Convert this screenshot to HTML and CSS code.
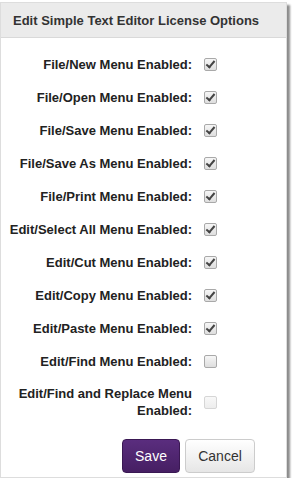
FILE: index.html
```html
<!DOCTYPE html>
<html lang="en">
  <head>
    <meta charset="UTF-8" />
    <meta name="viewport" content="width=device-width, initial-scale=1.0" />
    <title>License Options</title>
    <link rel="stylesheet" href="styles.css">
  </head>
  <body>
    <div class="panel">
      <div class="panel-heading">Edit Simple Text Editor License Options</div>
      <form class="panel-body">
        <div class="form-row">
          <label for="fileNew">File/New Menu Enabled:</label>
          <input type="checkbox" id="fileNew" checked />
        </div>
        <div class="form-row">
          <label for="fileOpen">File/Open Menu Enabled:</label>
          <input type="checkbox" id="fileOpen" checked />
        </div>
        <div class="form-row">
          <label for="fileSave">File/Save Menu Enabled:</label>
          <input type="checkbox" id="fileSave" checked />
        </div>
        <div class="form-row">
          <label for="fileSaveAs">File/Save As Menu Enabled:</label>
          <input type="checkbox" id="fileSaveAs" checked />
        </div>
        <div class="form-row">
          <label for="filePrint">File/Print Menu Enabled:</label>
          <input type="checkbox" id="filePrint" checked />
        </div>
        <div class="form-row">
          <label for="editSelectAll">Edit/Select All Menu Enabled:</label>
          <input type="checkbox" id="editSelectAll" checked />
        </div>
        <div class="form-row">
          <label for="editCut">Edit/Cut Menu Enabled:</label>
          <input type="checkbox" id="editCut" checked />
        </div>
        <div class="form-row">
          <label for="editCopy">Edit/Copy Menu Enabled:</label>
          <input type="checkbox" id="editCopy" checked />
        </div>
        <div class="form-row">
          <label for="editPaste">Edit/Paste Menu Enabled:</label>
          <input type="checkbox" id="editPaste" checked />
        </div>
        <div class="form-row">
          <label for="editFind">Edit/Find Menu Enabled:</label>
          <input type="checkbox" id="editFind" />
        </div>
        <div class="form-row tall">
          <label for="editReplace">Edit/Find and Replace Menu Enabled:</label>
          <input type="checkbox" id="editReplace" disabled />
        </div>
        <div class="form-actions">
          <button type="button" class="btn btn-primary">Save</button>
          <button type="button" class="btn btn-default">Cancel</button>
        </div>
      </form>
    </div>
  </body>
</html>
```

FILE: styles.css
```css
body {
  font-family: "Liberation Sans", Arial, sans-serif;
  font-size: 13px;
  color: #222;
  margin: 0;
  padding: 2px 0 0 0;
  background: #fff;
}
.panel {
  width: 285px;
  border: 1px solid #ddd;
  box-shadow: 3px 3px 2px rgba(0, 0, 0, 0.45);
  background: #fff;
}
.panel-heading {
  background-color: #ebebeb;
  border-bottom: 1px solid #d9d9d9;
  padding: 10px 12px 9px;
  font-weight: bold;
  font-size: 13px;
  line-height: 15px;
  color: #333;
}
.panel-body {
  padding: 10px 0 4px 0;
}
.form-row {
  display: flex;
  align-items: center;
  height: 33px;
}
.form-row.tall {
  height: 40px;
  margin-top: 4px;
}
.form-row label {
  width: 188px;
  margin-left: 3px;
  text-align: right;
  font-weight: bold;
  line-height: 17px;
}
.form-row.tall label {
  padding-left: 14px;
  width: 174px;
}
.form-row input[type="checkbox"] {
  appearance: none;
  position: relative;
  width: 13px;
  height: 13px;
  margin: 0 0 0 12px;
  border: 1px solid #a9a9a9;
  border-radius: 2px;
  background: linear-gradient(#f6f6f6, #dedede);
}
.form-row input[type="checkbox"]:checked::after {
  content: "";
  position: absolute;
  left: 3px;
  top: 0px;
  width: 3px;
  height: 7px;
  border-right: 2px solid #444;
  border-bottom: 2px solid #444;
  transform: rotate(40deg);
}
.form-row input[type="checkbox"]:disabled {
  border-color: #d6d6d6;
  background: linear-gradient(#f8f8f8, #ededed);
}
.form-actions {
  display: flex;
  justify-content: flex-start;
  gap: 5px;
  padding: 17px 0 0 121px;
}
.btn {
  font-family: "Liberation Sans", Arial, sans-serif;
  font-size: 14px;
  height: 34px;
  padding: 0 12px;
  border-radius: 4px;
  cursor: pointer;
}
.btn-primary {
  color: #fff;
  background: linear-gradient(#5a2d7e, #461f63);
  border: 1px solid #3a1853;
  width: 58px;
}
.btn-default {
  color: #333;
  background: linear-gradient(#fff, #e6e6e6);
  border: 1px solid #ccc;
  width: 70px;
}
```
